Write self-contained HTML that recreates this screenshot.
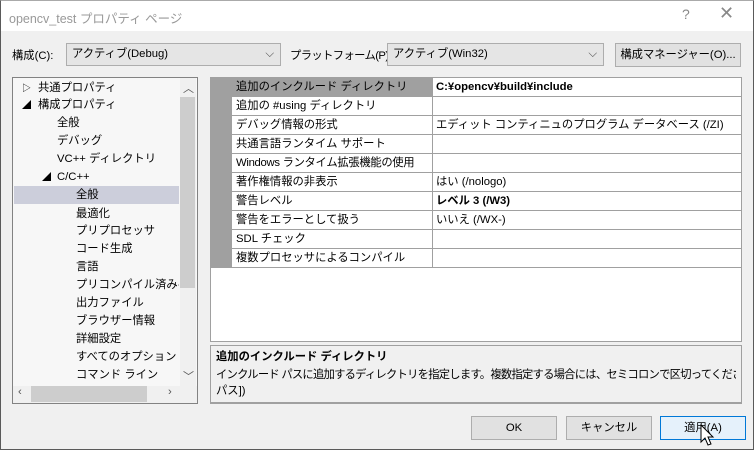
<!DOCTYPE html>
<html><head><meta charset="utf-8"><style>
*{margin:0;padding:0;box-sizing:border-box}
body{width:754px;height:450px;overflow:hidden;background:#f0f0f0;font-family:"Liberation Sans","Noto Sans CJK JP",sans-serif;font-size:11.3px;color:#000;position:relative}
.a{position:absolute;white-space:nowrap}
.win{position:absolute;left:0;top:0;width:754px;height:450px;border:1px solid #5a5a5a;border-top:1px solid #aaa}
.combo{position:absolute;background:#e5e5e5;border:1px solid #adadad;height:23px;line-height:21px;padding-left:5px}
.btn{position:absolute;background:#e1e1e1;border:1px solid #adadad;text-align:center}
.tree div{position:absolute;height:18px;line-height:18px;white-space:nowrap}
.row{position:absolute;left:232px;width:509px;height:19px;border-bottom:1px solid #a0a0a0;background:#fff}
.row span{position:absolute;line-height:18px;white-space:nowrap}
.n{left:4px}.v{left:204px}
.sep{position:absolute;left:200px;top:0;width:1px;height:19px;background:#a0a0a0}
</style></head><body>
<div class="win"></div>
<div class="a" style="left:1px;top:1px;width:752px;height:30px;background:#fff"></div>
<div class="a" style="left:9px;top:8px;font-size:12.5px;color:#999">opencv_test プロパティ ページ</div>
<div class="a" style="left:682px;top:6px;font-size:14px;color:#888">?</div>
<div class="a" style="left:719px;top:3px;font-size:18px;color:#888">✕</div>

<div class="a" style="left:12px;top:47px">構成(C):</div>
<div class="combo" style="left:66px;top:43px;width:215px">アクティブ(Debug)<span style="position:absolute;right:6px;top:0;color:#555">⌵</span></div>
<div class="a" style="left:290px;top:47px;letter-spacing:-0.6px">プラットフォーム(P):</div>
<div class="combo" style="left:387px;top:43px;width:217px">アクティブ(Win32)<span style="position:absolute;right:6px;top:0;color:#555">⌵</span></div>
<div class="btn" style="left:615px;top:43px;width:126px;height:24px;line-height:22px">構成マネージャー(O)...</div>

<div class="a" style="left:12px;top:77px;width:186px;height:327px;border:1px solid #828282;background:#f7f7f7"></div>
<div class="a" style="left:14px;top:186px;width:165px;height:18px;background:#cccedb"></div>
<div class="a" style="left:180px;top:78px;width:16px;height:308px;background:#f0f0f0"></div>
<div class="a" style="left:180px;top:97px;width:15px;height:191px;background:#cdcdcd"></div>
<div class="a" style="left:183px;top:80px;color:#555;font-size:11px">︿</div>
<div class="a" style="left:183px;top:368px;color:#555;font-size:11px">﹀</div>
<div class="a" style="left:13px;top:386px;width:184px;height:17px;background:#f0f0f0"></div>
<div class="a" style="left:31px;top:386px;width:116px;height:16px;background:#cdcdcd"></div>
<div class="a" style="left:18px;top:386px;color:#555">‹</div>
<div class="a" style="left:168px;top:386px;color:#555">›</div>
<div class="tree">
<div style="left:22px;top:79px;font-size:9px">▷</div><div style="left:38px;top:79px">共通プロパティ</div>
<div style="left:22px;top:96px;font-size:9px">◢</div><div style="left:38px;top:96px">構成プロパティ</div>
<div style="left:57px;top:114px">全般</div>
<div style="left:57px;top:132px">デバッグ</div>
<div style="left:57px;top:150px">VC++ ディレクトリ</div>
<div style="left:42px;top:168px;font-size:9px">◢</div><div style="left:57px;top:168px">C/C++</div>
<div style="left:76px;top:186px">全般</div>
<div style="left:76px;top:205px">最適化</div>
<div style="left:76px;top:222px">プリプロセッサ</div>
<div style="left:76px;top:240px">コード生成</div>
<div style="left:76px;top:258px">言語</div>
<div style="left:76px;top:276px;width:103px;overflow:hidden">プリコンパイル済みヘッダー</div>
<div style="left:76px;top:294px">出力ファイル</div>
<div style="left:76px;top:312px">ブラウザー情報</div>
<div style="left:76px;top:330px">詳細設定</div>
<div style="left:76px;top:348px">すべてのオプション</div>
<div style="left:76px;top:366px">コマンド ライン</div>
</div>

<div class="a" style="left:210px;top:77px;width:532px;height:265px;border:1px solid #a0a0a0;background:#fff"></div>
<div class="a" style="left:211px;top:78px;width:21px;height:190px;background:#a0a0a0"></div>
<div class="row" style="top:78px"><span class="n" style="left:0;width:200px;height:19px;background:#a0a0a0;padding-left:4px">追加のインクルード ディレクトリ</span><div class="sep"></div><span class="v" style="font-weight:bold">C:¥opencv¥build¥include</span></div>
<div class="row" style="top:97px"><span class="n">追加の #using ディレクトリ</span><div class="sep"></div></div>
<div class="row" style="top:116px"><span class="n">デバッグ情報の形式</span><div class="sep"></div><span class="v">エディット コンティニュのプログラム データベース (/ZI)</span></div>
<div class="row" style="top:135px"><span class="n">共通言語ランタイム サポート</span><div class="sep"></div></div>
<div class="row" style="top:154px"><span class="n" style="letter-spacing:-0.3px">Windows ランタイム拡張機能の使用</span><div class="sep"></div></div>
<div class="row" style="top:173px"><span class="n">著作権情報の非表示</span><div class="sep"></div><span class="v">はい (/nologo)</span></div>
<div class="row" style="top:192px"><span class="n">警告レベル</span><div class="sep"></div><span class="v" style="font-weight:bold">レベル 3 (/W3)</span></div>
<div class="row" style="top:211px"><span class="n">警告をエラーとして扱う</span><div class="sep"></div><span class="v">いいえ (/WX-)</span></div>
<div class="row" style="top:230px"><span class="n">SDL チェック</span><div class="sep"></div></div>
<div class="row" style="top:249px"><span class="n">複数プロセッサによるコンパイル</span><div class="sep"></div></div>

<div class="a" style="left:210px;top:345px;width:532px;height:59px;border:1px solid #a0a0a0;border-bottom:2px solid #a0a0a0;background:#f0f0f0"></div>
<div class="a" style="left:216px;top:348px;font-weight:bold">追加のインクルード ディレクトリ</div>
<div class="a" style="left:216px;top:366px;width:520px;overflow:hidden;letter-spacing:-0.75px">インクルード パスに追加するディレクトリを指定します。複数指定する場合には、セミコロンで区切ってください。(/I[</div>
<div class="a" style="left:216px;top:382px">パス])</div>

<div class="btn" style="left:471px;top:416px;width:86px;height:24px;line-height:22px">OK</div>
<div class="btn" style="left:566px;top:416px;width:86px;height:24px;line-height:22px">キャンセル</div>
<div class="btn" style="left:660px;top:416px;width:86px;height:24px;line-height:22px;background:#e5f1fb;border-color:#0078d7">適用(A)</div>
<svg class="a" style="left:700px;top:424px" width="16" height="24" viewBox="0 0 16 24"><path d="M1 1 L1 18 L5 14 L8 21 L11 20 L8 13 L13 13 Z" fill="#fff" stroke="#000" stroke-width="1"/></svg>
</body></html>
